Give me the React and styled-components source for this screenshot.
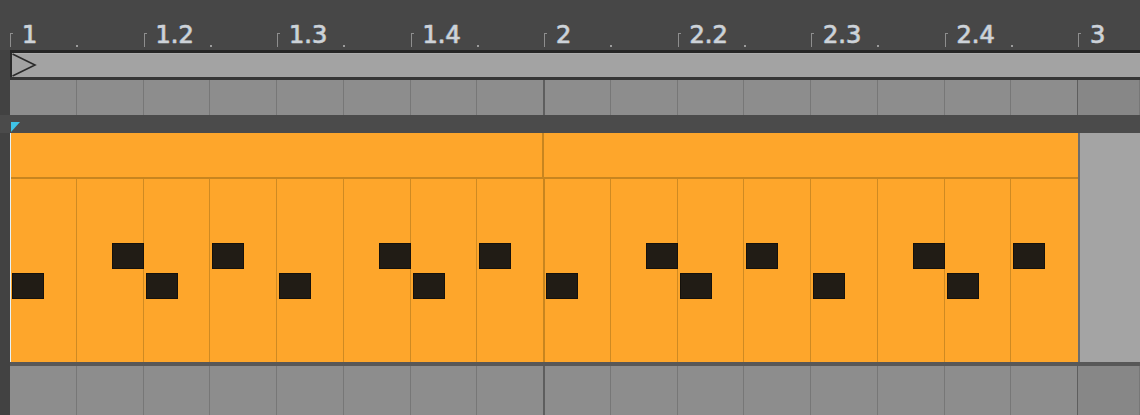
import React from "react";
import styled, { createGlobalStyle } from "styled-components";

const COL = 66.75;
const BEAT = COL * 2;
const EIGHTH = COL / 2;

const GlobalStyle = createGlobalStyle`
  html, body { margin: 0; padding: 0; background: #434343; }
  body { font-family: "DejaVu Sans", "Liberation Sans", sans-serif; }
`;

const Frame = styled.div`
  width: 1140px;
  height: 415px;
  overflow: hidden;
  display: flex;
  flex-direction: column;
  background: #424242;
`;

const Ruler = styled.div`
  height: 50px;
  flex: none;
  background: #474747;
  padding-left: 10px;
  display: grid;
  grid-template-columns: repeat(8, ${BEAT}px) 1fr;
`;

const BeatCell = styled.div`
  position: relative;
  display: flex;
  align-items: flex-start;
  &::after {
    content: "";
    display: ${(p) => (p.$last ? "none" : "block")};
    position: absolute;
    left: ${COL - 0.5}px;
    bottom: 3px;
    width: 2px;
    height: 2px;
    background: #9c9c9c;
  }
`;

const Tick = styled.div`
  flex: none;
  width: 2px;
  height: 13px;
  margin-top: 33px;
  border-left: 1px solid #8e8e8e;
  border-top: 1px solid #8e8e8e;
`;

const Label = styled.span`
  margin-top: 23px;
  margin-left: 9px;
  font-family: "DejaVu Sans", "Liberation Sans", sans-serif;
  font-size: 24px;
  line-height: 1;
  color: #cdd2d8;
  -webkit-text-stroke: 0.6px #cdd2d8;
  text-shadow: -0.8px 0 rgba(90, 170, 255, 0.5), 0.8px 0 rgba(255, 170, 80, 0.4);
`;

const Rule = styled.div`
  height: ${(p) => p.$h}px;
  flex: none;
  margin-left: 10px;
  background: ${(p) => p.$c};
`;

const Scrub = styled.div`
  height: 24px;
  flex: none;
  margin-left: 10px;
  background: #a3a3a3;
  border-left: 2px solid #2a2a2a;
  box-shadow: inset 0 1px 0 #adadad;
  display: flex;
  align-items: center;
`;

const Lane = styled.div`
  height: ${(p) => p.$h}px;
  flex: none;
  margin-left: 10px;
  display: grid;
  grid-template-columns: repeat(16, ${COL}px) 1fr;
  background: #8d8d8d;
`;

const LaneCell = styled.div`
  border-right: ${(p) => (p.$bar ? "2px solid #5e5e5e" : "1px solid #777777")};
  margin-right: ${(p) => (p.$bar ? "-1px" : "0")};
  background: ${(p) => (p.$rest ? "#878787" : "transparent")};
  box-sizing: border-box;
`;

const Band = styled.div`
  height: 18px;
  flex: none;
  background: #4b4b4b;
  padding-left: 11px;
  display: flex;
  align-items: flex-start;
`;

const ClipRow = styled.div`
  height: 229px;
  flex: none;
  margin-left: 10px;
  display: flex;
`;

const Clip = styled.div`
  width: ${COL * 16}px;
  flex: none;
  background: #fea62b;
  border-left: 1px solid #e6f2f6;
  box-sizing: border-box;
  display: flex;
  flex-direction: column;
`;

const ClipHeader = styled.div`
  height: 44px;
  flex: none;
  display: grid;
  grid-template-columns: ${COL * 8 - 1}px 1fr;
`;

const HeaderHalf = styled.div`
  border-right: ${(p) => (p.$bar ? "2px solid #c8851f" : "none")};
`;

const HeaderLine = styled.div`
  height: 2px;
  flex: none;
  background: #c8851f;
`;

const NoteArea = styled.div`
  flex: 1;
  position: relative;
  display: grid;
  grid-template-columns: ${COL - 1}px repeat(15, ${COL}px);
`;

const NoteCol = styled.div`
  border-right: ${(p) =>
    p.$last ? "none" : p.$bar ? "2px solid #c8851f" : "1px solid #cf8a22"};
  margin-right: ${(p) => (p.$bar ? "-1px" : "0")};
  position: relative;
  z-index: ${(p) => (p.$bar ? 1 : 0)};
`;

const Note = styled.div`
  position: absolute;
  width: 30px;
  height: 24px;
  background: #211c15;
  border: 1px solid #15110b;
  top: ${(p) => (p.$high ? 64 : 94)}px;
  z-index: 2;
`;

const Rest = styled.div`
  flex: 1;
  background: #a4a4a4;
  border-left: 2px solid #6d6d6d;
`;

const notes = [
  [0, false], [3, true], [4, false], [6, true], [8, false], [11, true],
  [12, false], [14, true], [16, false], [19, true], [20, false], [22, true],
  [24, false], [27, true], [28, false], [30, true],
];

const labels = ["1", "1.2", "1.3", "1.4", "2", "2.2", "2.3", "2.4", "3"];

function LaneCells() {
  return (
    <>
      {Array.from({ length: 16 }, (_, i) => (
        <LaneCell key={i} $bar={i === 7 || i === 15} />
      ))}
      <LaneCell $rest />
    </>
  );
}

export default function App() {
  return (
    <>
      <GlobalStyle />
      <Frame>
        <Ruler>
          {labels.map((l, i) => (
            <BeatCell key={l} $last={i === labels.length - 1}>
              <Tick />
              <Label>{l}</Label>
            </BeatCell>
          ))}
        </Ruler>
        <Rule $h={3} $c="#262626" />
        <Scrub>
          <svg width="26" height="24" viewBox="0 0 26 24">
            <polyline points="0.5,1 23,12 0.5,23" fill="none" stroke="#2a2a2a" strokeWidth="1.6" />
          </svg>
        </Scrub>
        <Rule $h={3} $c="#363636" />
        <Lane $h={35}>
          <LaneCells />
        </Lane>
        <Band>
          <svg width="10" height="11" viewBox="0 0 10 11" style={{ marginTop: 7 }}>
            <polygon points="0,0 9,0 0,10" fill="#3fc3e6" />
          </svg>
        </Band>
        <ClipRow>
          <Clip>
            <ClipHeader>
              <HeaderHalf $bar />
              <HeaderHalf />
            </ClipHeader>
            <HeaderLine />
            <NoteArea>
              {Array.from({ length: 16 }, (_, i) => (
                <NoteCol key={i} $bar={i === 7} $last={i === 15} />
              ))}
              {notes.map(([pos, high]) => (
                <Note key={pos} $high={high} style={{ left: pos * EIGHTH + 1 }} />
              ))}
            </NoteArea>
          </Clip>
          <Rest />
        </ClipRow>
        <Rule $h={4} $c="#585858" />
        <Lane $h={49}>
          <LaneCells />
        </Lane>
      </Frame>
    </>
  );
}
